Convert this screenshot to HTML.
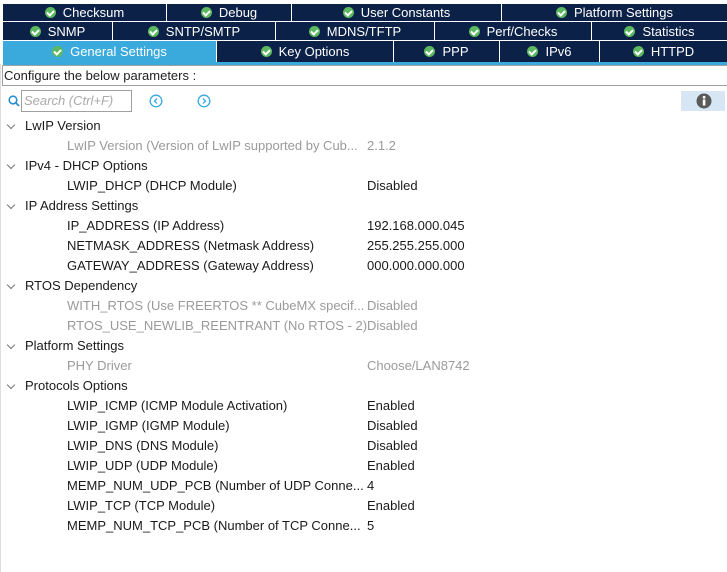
<!DOCTYPE html>
<html><head><style>
*{margin:0;padding:0;box-sizing:border-box}
body{width:727px;height:572px;background:#fff;font-family:"Liberation Sans",sans-serif;position:relative;overflow:hidden}
.tab{position:absolute;background:#0c2148;color:#fff;font-size:13px;display:flex;align-items:center;justify-content:center;border-right:1px solid #fff;border-bottom:1px solid #fff}
.tab.act{background:#3aa9dc}
.ck{display:inline-block;width:11px;height:11px;border-radius:50%;background:#5cb860;margin-right:7px;position:relative}
.ck:after{content:"";position:absolute;left:3px;top:2px;width:3px;height:5px;border:solid #fff;border-width:0 2px 2px 0;transform:rotate(45deg)}
.row{position:absolute;left:0;height:20px;line-height:20px;font-size:13px;color:#1a1a1a;white-space:nowrap}
.g{color:#9a9a9a}
.arr{position:absolute;left:8px;top:6px;width:6px;height:6px;border:solid #777;border-width:0 1px 1px 0;transform:rotate(45deg)}
</style></head><body>
<div class="tab" style="left:3px;top:4px;width:164px;height:18px"><span class="ck"></span>Checksum</div>
<div class="tab" style="left:167px;top:4px;width:125px;height:18px"><span class="ck"></span>Debug</div>
<div class="tab" style="left:292px;top:4px;width:210px;height:18px"><span class="ck"></span>User Constants</div>
<div class="tab" style="left:502px;top:4px;width:225px;height:18px;border-right:0"><span class="ck"></span>Platform Settings</div>
<div class="tab" style="left:3px;top:22px;width:110px;height:19px"><span class="ck"></span>SNMP</div>
<div class="tab" style="left:113px;top:22px;width:163px;height:19px"><span class="ck"></span>SNTP/SMTP</div>
<div class="tab" style="left:276px;top:22px;width:159px;height:19px"><span class="ck"></span>MDNS/TFTP</div>
<div class="tab" style="left:435px;top:22px;width:157px;height:19px"><span class="ck"></span>Perf/Checks</div>
<div class="tab" style="left:592px;top:22px;width:135px;height:19px;border-right:0"><span class="ck"></span>Statistics</div>
<div class="tab act" style="left:3px;top:41px;width:214px;height:21px;border-bottom:0"><span class="ck"></span>General Settings</div>
<div class="tab" style="left:217px;top:41px;width:177px;height:21px;border-bottom:0"><span class="ck"></span>Key Options</div>
<div class="tab" style="left:394px;top:41px;width:106px;height:21px;border-bottom:0"><span class="ck"></span>PPP</div>
<div class="tab" style="left:500px;top:41px;width:100px;height:21px;border-bottom:0"><span class="ck"></span>IPv6</div>
<div class="tab" style="left:600px;top:41px;width:127px;height:21px;border-right:0;border-bottom:0"><span class="ck"></span>HTTPD</div>
<div style="position:absolute;left:3px;top:62px;width:724px;height:3px;background:#3aa9dc"></div>
<div style="position:absolute;left:0;top:64px;width:1px;height:508px;background:#ddd"></div>
<div style="position:absolute;left:2px;top:65px;width:725px;height:21px;border:1px solid #a0a0a0;border-right:0;font-size:13px;line-height:20px;padding-left:1px;color:#222">Configure the below parameters :</div>
<svg style="position:absolute;left:8px;top:95px" width="12" height="12"><circle cx="5" cy="5" r="3.8" fill="none" stroke="#2a8fd0" stroke-width="1.6"/><line x1="8" y1="8" x2="11" y2="11" stroke="#2a8fd0" stroke-width="1.8"/></svg>
<div style="position:absolute;left:21px;top:90px;width:111px;height:22px;border:1px solid #a0a0a0;font-size:13px;font-style:italic;color:#aaa;line-height:20px;padding-left:2px">Search (Ctrl+F)</div>
<svg style="position:absolute;left:149px;top:94px" width="14" height="14"><circle cx="7" cy="7" r="5.8" fill="none" stroke="#3aa9dc" stroke-width="1.3"/><path d="M8 4.5L5.5 7L8 9.5" fill="none" stroke="#3aa9dc" stroke-width="1.3"/></svg>
<svg style="position:absolute;left:197px;top:94px" width="14" height="14"><circle cx="7" cy="7" r="5.8" fill="none" stroke="#3aa9dc" stroke-width="1.3"/><path d="M6 4.5L8.5 7L6 9.5" fill="none" stroke="#3aa9dc" stroke-width="1.3"/></svg>
<div style="position:absolute;left:681px;top:91px;width:44px;height:20px;background:#d6e6f5"></div>
<svg style="position:absolute;left:696px;top:93px" width="16" height="16"><circle cx="8" cy="8" r="7.5" fill="#5a5a5a"/><rect x="6.8" y="6.5" width="2.6" height="6" fill="#fff"/><circle cx="8.1" cy="4.3" r="1.4" fill="#fff"/></svg>

<div class="row" style="top:116px"><span class="arr"></span><span style="position:absolute;left:25px">LwIP Version</span></div>
<div class="row g" style="top:136px"><span style="position:absolute;left:67px">LwIP Version (Version of LwIP supported by Cub...</span><span style="position:absolute;left:367px">2.1.2</span></div>
<div class="row" style="top:156px"><span class="arr"></span><span style="position:absolute;left:25px">IPv4 - DHCP Options</span></div>
<div class="row" style="top:176px"><span style="position:absolute;left:67px">LWIP_DHCP (DHCP Module)</span><span style="position:absolute;left:367px">Disabled</span></div>
<div class="row" style="top:196px"><span class="arr"></span><span style="position:absolute;left:25px">IP Address Settings</span></div>
<div class="row" style="top:216px"><span style="position:absolute;left:67px">IP_ADDRESS (IP Address)</span><span style="position:absolute;left:367px">192.168.000.045</span></div>
<div class="row" style="top:236px"><span style="position:absolute;left:67px">NETMASK_ADDRESS (Netmask Address)</span><span style="position:absolute;left:367px">255.255.255.000</span></div>
<div class="row" style="top:256px"><span style="position:absolute;left:67px">GATEWAY_ADDRESS (Gateway Address)</span><span style="position:absolute;left:367px">000.000.000.000</span></div>
<div class="row" style="top:276px"><span class="arr"></span><span style="position:absolute;left:25px">RTOS Dependency</span></div>
<div class="row g" style="top:296px"><span style="position:absolute;left:67px">WITH_RTOS (Use FREERTOS ** CubeMX specif...</span><span style="position:absolute;left:367px">Disabled</span></div>
<div class="row g" style="top:316px"><span style="position:absolute;left:67px">RTOS_USE_NEWLIB_REENTRANT (No RTOS - 2)</span><span style="position:absolute;left:367px">Disabled</span></div>
<div class="row" style="top:336px"><span class="arr"></span><span style="position:absolute;left:25px">Platform Settings</span></div>
<div class="row g" style="top:356px"><span style="position:absolute;left:67px">PHY Driver</span><span style="position:absolute;left:367px">Choose/LAN8742</span></div>
<div class="row" style="top:376px"><span class="arr"></span><span style="position:absolute;left:25px">Protocols Options</span></div>
<div class="row" style="top:396px"><span style="position:absolute;left:67px">LWIP_ICMP (ICMP Module Activation)</span><span style="position:absolute;left:367px">Enabled</span></div>
<div class="row" style="top:416px"><span style="position:absolute;left:67px">LWIP_IGMP (IGMP Module)</span><span style="position:absolute;left:367px">Disabled</span></div>
<div class="row" style="top:436px"><span style="position:absolute;left:67px">LWIP_DNS (DNS Module)</span><span style="position:absolute;left:367px">Disabled</span></div>
<div class="row" style="top:456px"><span style="position:absolute;left:67px">LWIP_UDP (UDP Module)</span><span style="position:absolute;left:367px">Enabled</span></div>
<div class="row" style="top:476px"><span style="position:absolute;left:67px">MEMP_NUM_UDP_PCB (Number of UDP Conne...</span><span style="position:absolute;left:367px">4</span></div>
<div class="row" style="top:496px"><span style="position:absolute;left:67px">LWIP_TCP (TCP Module)</span><span style="position:absolute;left:367px">Enabled</span></div>
<div class="row" style="top:516px"><span style="position:absolute;left:67px">MEMP_NUM_TCP_PCB (Number of TCP Conne...</span><span style="position:absolute;left:367px">5</span></div>
</body></html>
